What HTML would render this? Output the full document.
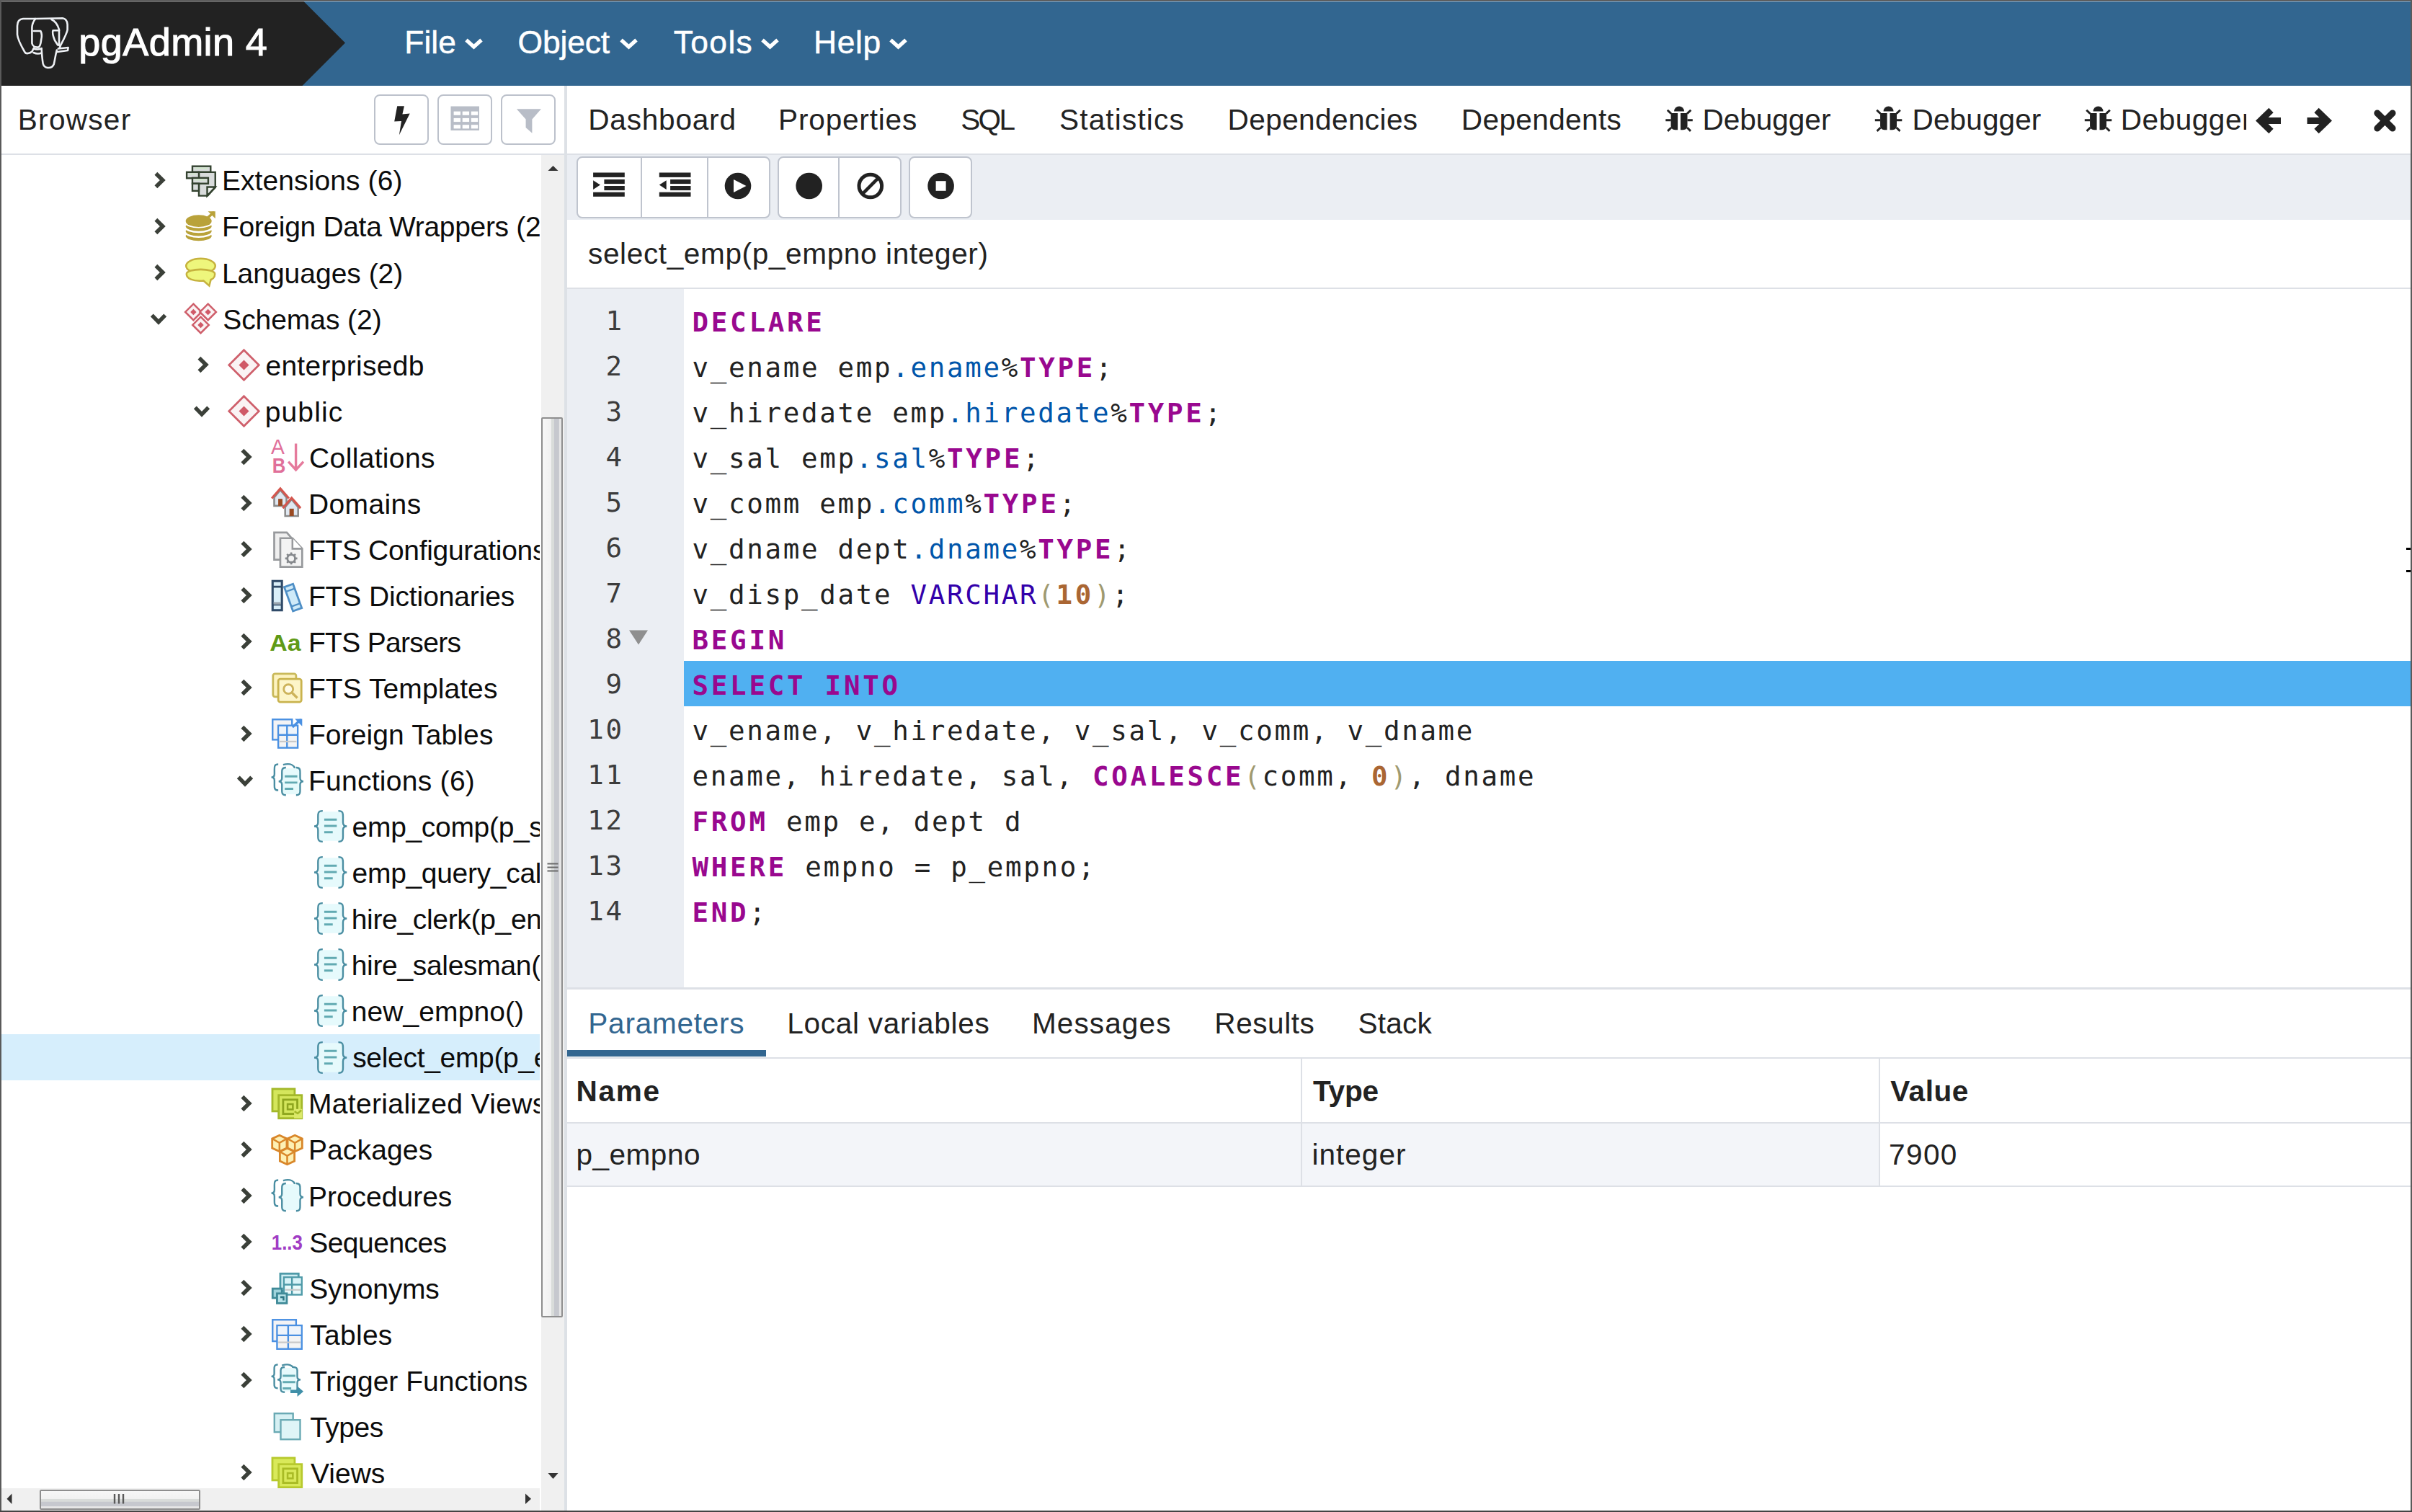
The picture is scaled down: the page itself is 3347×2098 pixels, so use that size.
<!DOCTYPE html>
<html lang="en"><head><meta charset="utf-8"><title>pgAdmin 4</title>
<style>
html,body{margin:0;padding:0;}
body{width:3347px;height:2098px;position:relative;overflow:hidden;background:#fff;font-family:"Liberation Sans",Arial,sans-serif;color:#222;}
div,svg{position:absolute;box-sizing:border-box;}
svg{overflow:visible;}
.t{white-space:pre;}
.clip{overflow:hidden;}
</style></head><body>
<div style="left:0px;top:0px;width:3347px;height:119px;background:#326690;"></div>
<svg style="left:0.0px;top:0.0px;" width="480.0" height="119.0" viewBox="0 0 480 119"><polygon points="0,0 419.5,0 479,59.5 419.5,119 0,119" fill="#222"/></svg>
<div class="t " style="left:109.3px;top:30.8px;font-size:54px;line-height:54px;color:#fff;letter-spacing:0.43px;-webkit-text-stroke:1.1px #fff;">pgAdmin 4</div>
<svg style="left:10.0px;top:10.0px;" width="100.0" height="100.0" viewBox="0 0 100 100"><g fill="none" stroke="#eef1f5" stroke-width="2.6" stroke-linejoin="round" stroke-linecap="round"><path d="M39 16 H22 C16.5 16.5 14 20.5 14 26 V38 C14.6 45 19 53 24.5 62.5 C26 65 31 64.5 34.5 61.5 L37 56.5"/><path d="M39 16.2 C36 20 34.6 24 34.4 28 V50 C35 54 39 56 43.5 55.5 C46 54.5 46.6 50 47.2 45 C48.4 40 48 36 46.3 33 H37"/><path d="M39 16 L77 15.2 C81 16 83.4 19 83.6 24 V31.5 C82.5 37 79.5 42.5 74 53 L72.7 56.5"/><path d="M61.5 17 C66 19 70 24 72 31 V53"/><path d="M72 32.2 H63.5 C62.4 35 63 38.5 66 46 L70.2 52.5"/><path d="M70.8 57.5 L84.6 56 L84 60 L69.6 62"/><path d="M47.6 57 C48 64 48.3 70 49.6 78 C50.5 82 52.5 83.6 56 84 C60.5 84.4 63.6 82 64.8 79 C66 74 66.6 68 68.8 59.5"/><path d="M37 57.5 C40 59 44 58.5 47.6 57.5 M36.5 63 C40 64.8 44.5 64.8 47.8 63.5"/></g></svg>
<div class="t " style="left:561.3px;top:37.0px;font-size:44.4px;line-height:44.4px;color:#fff;letter-spacing:0.01px;-webkit-text-stroke:0.5px #fff;">File</div>
<svg style="left:644.0px;top:52.0px;" width="27.0" height="18.5" viewBox="0 0 27 18.5"><polyline points="3,3.5 13.5,13 24,3.5" fill="none" stroke="#fff" stroke-width="5.2" stroke-linejoin="miter"/></svg>
<div class="t " style="left:718.5px;top:37.0px;font-size:44.4px;line-height:44.4px;color:#fff;letter-spacing:-0.12px;-webkit-text-stroke:0.5px #fff;">Object</div>
<svg style="left:858.9px;top:52.0px;" width="27.0" height="18.5" viewBox="0 0 27 18.5"><polyline points="3,3.5 13.5,13 24,3.5" fill="none" stroke="#fff" stroke-width="5.2" stroke-linejoin="miter"/></svg>
<div class="t " style="left:934.8px;top:37.0px;font-size:44.4px;line-height:44.4px;color:#fff;letter-spacing:1.34px;-webkit-text-stroke:0.5px #fff;">Tools</div>
<svg style="left:1055.2px;top:52.0px;" width="27.0" height="18.5" viewBox="0 0 27 18.5"><polyline points="3,3.5 13.5,13 24,3.5" fill="none" stroke="#fff" stroke-width="5.2" stroke-linejoin="miter"/></svg>
<div class="t " style="left:1129.1px;top:37.0px;font-size:44.4px;line-height:44.4px;color:#fff;letter-spacing:0.56px;-webkit-text-stroke:0.5px #fff;">Help</div>
<svg style="left:1233.4px;top:52.0px;" width="27.0" height="18.5" viewBox="0 0 27 18.5"><polyline points="3,3.5 13.5,13 24,3.5" fill="none" stroke="#fff" stroke-width="5.2" stroke-linejoin="miter"/></svg>
<div class="t " style="left:24.8px;top:146.3px;font-size:40.6px;line-height:40.6px;color:#222222;letter-spacing:1.26px;">Browser</div>
<div style="left:2px;top:213px;width:783px;height:2px;background:#dde0e6;"></div>
<div style="left:519px;top:131px;width:76px;height:70px;background:#fff;border:2px solid #bcc1cb;border-radius:8px;"></div>
<div style="left:607px;top:131px;width:76px;height:70px;background:#fff;border:2px solid #bcc1cb;border-radius:8px;"></div>
<div style="left:695px;top:131px;width:76px;height:70px;background:#fff;border:2px solid #bcc1cb;border-radius:8px;"></div>
<svg style="left:0;top:0" width="800" height="214" viewBox="0 0 800 214"><polygon points="551.2,147.3 560.9,147.3 558.4,158.5 568.7,157.6 553.9,187.2 557.0,168.1 547.2,168.6" fill="#222"/><rect x="625.5" y="147.5" width="39.5" height="33.5" fill="#b8bdc7"/><rect x="629.6" y="154.6" width="9.4" height="5.2" fill="#fff"/><rect x="629.6" y="163.9" width="9.4" height="5.2" fill="#fff"/><rect x="629.6" y="173.2" width="9.4" height="5.2" fill="#fff"/><rect x="641.7" y="154.6" width="9.4" height="5.2" fill="#fff"/><rect x="641.7" y="163.9" width="9.4" height="5.2" fill="#fff"/><rect x="641.7" y="173.2" width="9.4" height="5.2" fill="#fff"/><rect x="653.8" y="154.6" width="9.4" height="5.2" fill="#fff"/><rect x="653.8" y="163.9" width="9.4" height="5.2" fill="#fff"/><rect x="653.8" y="173.2" width="9.4" height="5.2" fill="#fff"/><polygon points="716.9,151.3 750.9,151.3 738.4,165.4 738.4,184.7 729.6,177.1 729.6,165.4" fill="#b8bdc7"/></svg>
<div style="left:783px;top:119px;width:4px;height:1979px;background:#dde1e6;"></div>
<div style="left:751px;top:214.5px;width:32px;height:1882px;background:#f0f0f0;"></div>
<div style="left:2px;top:2065px;width:747px;height:31px;background:#f0f0f0;"></div>
<div style="left:751.2px;top:579px;width:29.8px;height:1249px;background:linear-gradient(90deg,#f7f7f7 0%,#f1f1f1 44%,#d9dcda 46%,#d9dcda 60%,#c6c8ce 62%,#c6c8ce 86%,#e6e6e6 90%);border:2px solid #8e8e8e;border-radius:2px;"></div>
<div style="left:55px;top:2066.5px;width:223px;height:28.5px;background:linear-gradient(180deg,#f7f7f7 0%,#f1f1f1 44%,#d9dcda 46%,#d9dcda 60%,#c6c8ce 62%,#c6c8ce 86%,#e6e6e6 90%);border:2px solid #8e8e8e;border-radius:2px;"></div>
<svg style="left:0;top:0" width="790" height="2098" viewBox="0 0 790 2098"><polygon points="760.5,237 774.5,237 767.5,230" fill="#333"/><polygon points="760.5,2044 774.5,2044 767.5,2052" fill="#333"/><polygon points="16.5,2072.5 16.5,2087 9.5,2079.8" fill="#333"/><polygon points="729,2072.5 729,2087 737,2079.8" fill="#333"/><path d="M759.5 1198.5h15M759.5 1203.5h15M759.5 1208.5h15" stroke="#6a6a6a" stroke-width="2"/><path d="M159 2073v13.5M165 2073v13.5M171 2073v13.5" stroke="#5a5a5a" stroke-width="2.4"/></svg>
<div class="clip" style="left:2px;top:214.5px;width:747px;height:1850px;">
<svg style="left:210.3px;top:22.0px;" width="22.0" height="26.0" viewBox="0 0 22 26"><polyline points="4.4,3.8 13.8,13 4.4,22.2" fill="none" stroke="#3b4039" stroke-width="5.5"/></svg>
<svg style="left:253.5px;top:13.0px;" width="45.0" height="45.0" viewBox="0 0 16 16"><rect x="3.9" y="0.95" width="9" height="2.9" fill="#d9dcdc" stroke="#33422f" stroke-width="0.85" stroke-linejoin="miter"/><path d="M7.1 3.85 H15.2 V11.4 L11.4 15.5 H7.1 Z" fill="#d9dcdc" stroke="#33422f" stroke-width="0.85" stroke-linejoin="miter"/><rect x="1.1" y="3.85" width="6" height="3" fill="#d9dcdc" stroke="#33422f" stroke-width="0.85" stroke-linejoin="miter"/><rect x="3.9" y="6.7" width="7.8" height="2.8" fill="#d9dcdc" stroke="#33422f" stroke-width="0.85" stroke-linejoin="miter"/><rect x="3.9" y="9.5" width="3.2" height="3.6" fill="#d9dcdc" stroke="#33422f" stroke-width="0.85" stroke-linejoin="miter"/><path d="M11.2 15.5 V11.2 H15.2 Z" fill="#eef0ef" stroke="#33422f" stroke-width="0.85"/><path d="M5.2 1.9h6.2M2.2 4.8h3.8M5 7.7h5.4" stroke="#cfe8c8" stroke-width="0.6"/></svg>
<div class="t " style="left:305.9px;top:16.9px;font-size:39px;line-height:39px;color:#0c0c0c;letter-spacing:0.10px;">Extensions (6)</div>
<svg style="left:210.3px;top:86.1px;" width="22.0" height="26.0" viewBox="0 0 22 26"><polyline points="4.4,3.8 13.8,13 4.4,22.2" fill="none" stroke="#3b4039" stroke-width="5.5"/></svg>
<svg style="left:253.5px;top:77.1px;" width="45.0" height="45.0" viewBox="0 0 16 16"><ellipse cx="7" cy="12.6" rx="6.4" ry="2.4" fill="#b9a23a"/><ellipse cx="7" cy="11.2" rx="6.6" ry="2.3" fill="#fff"/><ellipse cx="7" cy="10.2" rx="6.4" ry="2.4" fill="#b9a23a"/><ellipse cx="7" cy="8.8" rx="6.6" ry="2.3" fill="#fff"/><ellipse cx="7" cy="7.8" rx="6.4" ry="2.4" fill="#b9a23a"/><ellipse cx="7" cy="6.4" rx="6.6" ry="2.3" fill="#fff"/><ellipse cx="7" cy="5.2" rx="6.4" ry="3" fill="#b9a23a"/><path d="M10.4 4.6 L14.6 0.8" stroke="#b9a23a" stroke-width="1.3"/><path d="M11.6 0.4 H15.2 V4 Z" fill="#b9a23a"/></svg>
<div class="t " style="left:305.9px;top:80.9px;font-size:39px;line-height:39px;color:#0c0c0c;letter-spacing:-0.32px;">Foreign Data Wrappers (2)</div>
<svg style="left:210.3px;top:150.1px;" width="22.0" height="26.0" viewBox="0 0 22 26"><polyline points="4.4,3.8 13.8,13 4.4,22.2" fill="none" stroke="#3b4039" stroke-width="5.5"/></svg>
<svg style="left:253.5px;top:141.1px;" width="45.0" height="45.0" viewBox="0 0 16 16"><ellipse cx="8" cy="4.6" rx="7.2" ry="3.6" fill="#eef67c" stroke="#c6b23e" stroke-width="0.9"/><path d="M1 8.6 C1 5.6 15 5.6 15 8.6 C15 10.4 13.6 11.2 13 11.4 L12.2 14.4 L9.4 11.9 C4 12.4 1 10.8 1 8.6 Z" fill="#eef67c" stroke="#c6b23e" stroke-width="0.9"/></svg>
<div class="t " style="left:305.9px;top:145.0px;font-size:39px;line-height:39px;color:#0c0c0c;letter-spacing:-0.01px;">Languages (2)</div>
<svg style="left:205.3px;top:218.6px;" width="26.0" height="22.0" viewBox="0 0 26 22"><polyline points="3.8,4.4 13,13.8 22.2,4.4" fill="none" stroke="#3b4039" stroke-width="5.5"/></svg>
<svg style="left:253.5px;top:205.1px;" width="45.0" height="45.0" viewBox="0 0 16 16"><path d="M4.4 0.5999999999999996 L8.4 4.6 L4.4 8.6 L0.40000000000000036 4.6 Z" fill="#faf3f4" stroke="#cf5f6b" stroke-width="0.9"/><path d="M4.4 3.0999999999999996 L5.9 4.6 L4.4 6.1 L2.9000000000000004 4.6 Z" fill="#d05a68"/><path d="M11.6 0.5999999999999996 L15.6 4.6 L11.6 8.6 L7.6 4.6 Z" fill="#faf3f4" stroke="#cf5f6b" stroke-width="0.9"/><path d="M11.6 3.0999999999999996 L13.1 4.6 L11.6 6.1 L10.1 4.6 Z" fill="#d05a68"/><path d="M8 7 L12 11 L8 15 L4 11 Z" fill="#faf3f4" stroke="#cf5f6b" stroke-width="0.9"/><path d="M8 9.5 L9.5 11 L8 12.5 L6.5 11 Z" fill="#d05a68"/></svg>
<div class="t " style="left:307.2px;top:209.0px;font-size:39px;line-height:39px;color:#0c0c0c;letter-spacing:-0.06px;">Schemas (2)</div>
<svg style="left:270.3px;top:278.2px;" width="22.0" height="26.0" viewBox="0 0 22 26"><polyline points="4.4,3.8 13.8,13 4.4,22.2" fill="none" stroke="#3b4039" stroke-width="5.5"/></svg>
<svg style="left:313.5px;top:269.2px;" width="45.0" height="45.0" viewBox="0 0 16 16"><path d="M8 0.5999999999999996 L15.4 8 L8 15.4 L0.5999999999999996 8 Z" fill="#faf3f4" stroke="#cf5f6b" stroke-width="0.95"/><path d="M8 5.5 L10.5 8 L8 10.5 L5.5 8 Z" fill="#d05a68"/></svg>
<div class="t " style="left:366.4px;top:273.1px;font-size:39px;line-height:39px;color:#0c0c0c;letter-spacing:0.30px;">enterprisedb</div>
<svg style="left:265.3px;top:346.8px;" width="26.0" height="22.0" viewBox="0 0 26 22"><polyline points="3.8,4.4 13,13.8 22.2,4.4" fill="none" stroke="#3b4039" stroke-width="5.5"/></svg>
<svg style="left:313.5px;top:333.2px;" width="45.0" height="45.0" viewBox="0 0 16 16"><path d="M8 0.5999999999999996 L15.4 8 L8 15.4 L0.5999999999999996 8 Z" fill="#faf3f4" stroke="#cf5f6b" stroke-width="0.95"/><path d="M8 5.5 L10.5 8 L8 10.5 L5.5 8 Z" fill="#d05a68"/></svg>
<div class="t " style="left:365.7px;top:337.1px;font-size:39px;line-height:39px;color:#0c0c0c;letter-spacing:1.13px;">public</div>
<svg style="left:330.3px;top:406.3px;" width="22.0" height="26.0" viewBox="0 0 22 26"><polyline points="4.4,3.8 13.8,13 4.4,22.2" fill="none" stroke="#3b4039" stroke-width="5.5"/></svg>
<svg style="left:373.5px;top:397.3px;" width="45.0" height="45.0" viewBox="0 0 16 16"><text x="0" y="6.4" font-family="Liberation Sans,Arial,sans-serif" font-size="10.6" fill="#e0709a" textLength="6.7" lengthAdjust="spacingAndGlyphs">A</text><text x="0.6" y="15.6" font-family="Liberation Sans,Arial,sans-serif" font-size="10.6" font-weight="700" fill="#e0709a" textLength="6.6" lengthAdjust="spacingAndGlyphs">B</text><path d="M12.3 1.2 V14 M8.6 10.2 L12.3 14.2 L16 10.2" fill="none" stroke="#e57a9c" stroke-width="1.2"/></svg>
<div class="t " style="left:427.1px;top:401.2px;font-size:39px;line-height:39px;color:#0c0c0c;letter-spacing:0.34px;">Collations</div>
<svg style="left:330.3px;top:470.3px;" width="22.0" height="26.0" viewBox="0 0 22 26"><polyline points="4.4,3.8 13.8,13 4.4,22.2" fill="none" stroke="#3b4039" stroke-width="5.5"/></svg>
<svg style="left:373.5px;top:461.3px;" width="45.0" height="45.0" viewBox="0 0 16 16"><path d="M1.6 5.06 V9.2 H7.649999999999999 V5.06 L4.624999999999999 1.38 Z" fill="#dfe8f2" stroke="#8a8a8a" stroke-width="0.9"/><rect x="3.59" y="5.75" width="2.07" height="3.4499999999999997" fill="#9a4a22"/><path d="M0.39999999999999997 5.52 L4.624999999999999 0.69 L8.849999999999998 5.52" fill="none" stroke="#d4564e" stroke-width="1.1"/><path d="M7 9.879999999999999 V14.2 H13.4 V9.879999999999999 L10.2 6.039999999999999 Z" fill="#dfe8f2" stroke="#8a8a8a" stroke-width="0.9"/><rect x="9.120000000000001" y="10.6" width="2.16" height="3.5999999999999996" fill="#9a4a22"/><path d="M5.8 10.36 L10.2 5.319999999999999 L14.6 10.36" fill="none" stroke="#d4564e" stroke-width="1.1"/></svg>
<div class="t " style="left:425.9px;top:465.2px;font-size:39px;line-height:39px;color:#0c0c0c;letter-spacing:0.40px;">Domains</div>
<svg style="left:330.3px;top:534.4px;" width="22.0" height="26.0" viewBox="0 0 22 26"><polyline points="4.4,3.8 13.8,13 4.4,22.2" fill="none" stroke="#3b4039" stroke-width="5.5"/></svg>
<svg style="left:373.5px;top:525.4px;" width="45.0" height="45.0" viewBox="0 0 16 16"><path d="M1.6 -0.4 H7.8 L10.2 2.4 V13 H1.6 Z" fill="#efefef" stroke="#97999c" stroke-width="0.95"/><path d="M4.6 2.4 H10.6 L15.4 7.6 V16.6 H4.6 Z" fill="#f3f3f3" stroke="#97999c" stroke-width="0.95"/><path d="M10.6 2.4 V7.6 H15.4" fill="#fff" stroke="#97999c" stroke-width="0.9"/><circle cx="10" cy="12.4" r="1.9" fill="none" stroke="#85888c" stroke-width="1"/><path d="M10 9.4v1M10 14.4v1M7 12.4h1M12 12.4h1M7.9 10.3l.7.7M11.4 13.8l.7.7M7.9 14.5l.7-.7M11.4 11l.7-.7" stroke="#85888c" stroke-width="0.9"/></svg>
<div class="t " style="left:425.9px;top:529.3px;font-size:39px;line-height:39px;color:#0c0c0c;letter-spacing:-0.32px;">FTS Configurations</div>
<svg style="left:330.3px;top:598.4px;" width="22.0" height="26.0" viewBox="0 0 22 26"><polyline points="4.4,3.8 13.8,13 4.4,22.2" fill="none" stroke="#3b4039" stroke-width="5.5"/></svg>
<svg style="left:373.5px;top:589.4px;" width="45.0" height="45.0" viewBox="0 0 16 16"><rect x="0.8" y="0.8" width="4.6" height="14.4" fill="#d9eef8" stroke="#2f4a68" stroke-width="1.1"/><path d="M0.8 3.6h4.6M0.8 12.4h4.6" stroke="#2f4a68" stroke-width="0.9"/><rect x="1.3" y="11.2" width="3.6" height="1.2" fill="#9aa4ad"/><g transform="rotate(-20 11 9)"><rect x="8.6" y="2.6" width="4.6" height="12.6" fill="#cfeaf8" stroke="#4f8fc6" stroke-width="1"/><path d="M8.6 5h4.6M8.6 12.8h4.6" stroke="#4f8fc6" stroke-width="0.8"/></g></svg>
<div class="t " style="left:425.9px;top:593.3px;font-size:39px;line-height:39px;color:#0c0c0c;letter-spacing:-0.12px;">FTS Dictionaries</div>
<svg style="left:330.3px;top:662.5px;" width="22.0" height="26.0" viewBox="0 0 22 26"><polyline points="4.4,3.8 13.8,13 4.4,22.2" fill="none" stroke="#3b4039" stroke-width="5.5"/></svg>
<svg style="left:373.5px;top:653.5px;" width="45.0" height="45.0" viewBox="0 0 16 16"><text x="-0.6" y="12.3" font-family="Liberation Sans,Arial,sans-serif" font-size="11.2" font-weight="700" fill="#5f9a16" textLength="15.4" lengthAdjust="spacingAndGlyphs">Aa</text></svg>
<div class="t " style="left:425.9px;top:657.4px;font-size:39px;line-height:39px;color:#0c0c0c;letter-spacing:-0.68px;">FTS Parsers</div>
<svg style="left:330.3px;top:726.5px;" width="22.0" height="26.0" viewBox="0 0 22 26"><polyline points="4.4,3.8 13.8,13 4.4,22.2" fill="none" stroke="#3b4039" stroke-width="5.5"/></svg>
<svg style="left:373.5px;top:717.5px;" width="45.0" height="45.0" viewBox="0 0 16 16"><rect x="1" y="1" width="11.4" height="11.4" rx="1" fill="#fdf3c0" stroke="#c9b95a" stroke-width="1"/><rect x="3.6" y="3.6" width="11.4" height="11.4" rx="1" fill="#fdf5c8" stroke="#c9b34e" stroke-width="1"/><circle cx="8.6" cy="8.6" r="2.3" fill="#fffbe6" stroke="#cdb35a" stroke-width="1"/><path d="M10.4 10.4 L13 13" stroke="#cdb35a" stroke-width="1.2"/></svg>
<div class="t " style="left:425.9px;top:721.4px;font-size:39px;line-height:39px;color:#0c0c0c;letter-spacing:0.08px;">FTS Templates</div>
<svg style="left:330.3px;top:790.6px;" width="22.0" height="26.0" viewBox="0 0 22 26"><polyline points="4.4,3.8 13.8,13 4.4,22.2" fill="none" stroke="#3b4039" stroke-width="5.5"/></svg>
<svg style="left:373.5px;top:781.6px;" width="45.0" height="45.0" viewBox="0 0 16 16"><rect x="0.8" y="0.8" width="9.6" height="10" fill="#f3f3f5" stroke="#4a90e2" stroke-width="0.85"/><rect x="3.6" y="3.8" width="9.6" height="11" fill="#f4f4f4" stroke="#4a90e2" stroke-width="0.85"/><rect x="4.1" y="4.3" width="8.6" height="3.96" fill="#eef4fb"/><path d="M3.6 8.42H13.2M7.92 3.8V14.8" stroke="#4a90e2" stroke-width="0.85"/><path d="M4.2 11.719999999999999H12.6" stroke="#c9c9c9" stroke-width="0.8"/><path d="M10.6 4.6 L14.8 0.8" stroke="#4a90e2" stroke-width="1.2"/><path d="M11.8 0.5 H15.4 V4.2 Z" fill="#4a90e2"/></svg>
<div class="t " style="left:425.9px;top:785.5px;font-size:39px;line-height:39px;color:#0c0c0c;letter-spacing:0.11px;">Foreign Tables</div>
<svg style="left:325.3px;top:859.2px;" width="26.0" height="22.0" viewBox="0 0 26 22"><polyline points="3.8,4.4 13,13.8 22.2,4.4" fill="none" stroke="#3b4039" stroke-width="5.5"/></svg>
<svg style="left:373.5px;top:845.7px;" width="45.0" height="45.0" viewBox="0 0 16 16"><path d="M3.6 0.2 C1.39 0.2 1.73 1.736 1.73 3.4000000000000004 V5.064 C1.73 6.216 1.22 6.6000000000000005 0.2 6.6000000000000005 C1.22 6.6000000000000005 1.73 6.984000000000001 1.73 8.136000000000001 V9.8 C1.73 11.464 1.39 13.0 3.6 13.0" fill="none" stroke="#4a8ea2" stroke-width="0.85"/><path d="M6 0.4 C10 -0.6 11.4 1 11.8 2.2" fill="none" stroke="#4a8ea2" stroke-width="0.85"/><path d="M5.78 2.2 H14.02 V15.0 H5.78 Z" fill="#e6fafc"/><path d="M7.4 1.8 C5.06 1.8 5.42 3.432 5.42 5.2 V6.968 C5.42 8.192 4.88 8.6 3.8 8.6 C4.88 8.6 5.42 9.008 5.42 10.232 V12.0 C5.42 13.768 5.06 15.4 7.4 15.4" fill="none" stroke="#4a8ea2" stroke-width="0.85"/><path d="M12.4 1.8 C14.74 1.8 14.38 3.432 14.38 5.2 V6.968 C14.38 8.192 14.92 8.6 16.0 8.6 C14.92 8.6 14.38 9.008 14.38 10.232 V12.0 C14.38 13.768 14.74 15.4 12.4 15.4" fill="none" stroke="#4a8ea2" stroke-width="0.85"/><path d="M6.799999999999999 6.1H12.999999999999998M6.799999999999999 9.200000000000001H12.999999999999998M6.799999999999999 12.3H10.999999999999998" stroke="#62aab2" stroke-width="1.05"/></svg>
<div class="t " style="left:425.9px;top:849.5px;font-size:39px;line-height:39px;color:#0c0c0c;letter-spacing:0.28px;">Functions (6)</div>
<svg style="left:433.5px;top:909.7px;" width="45.0" height="45.0" viewBox="0 0 16 16"><path d="M2.3100000000000005 0.8 H13.790000000000001 V15.2 H2.3100000000000005 Z" fill="#e6fafc"/><path d="M4.2 0.4 C1.47 0.4 1.8900000000000001 2.2239999999999998 1.8900000000000001 4.2 V6.176 C1.8900000000000001 7.5440000000000005 1.26 8.0 0 8.0 C1.26 8.0 1.8900000000000001 8.456 1.8900000000000001 9.824 V11.799999999999999 C1.8900000000000001 13.776 1.47 15.6 4.2 15.6" fill="none" stroke="#4a8ea2" stroke-width="0.85"/><path d="M11.900000000000002 0.4 C14.630000000000003 0.4 14.210000000000003 2.2239999999999998 14.210000000000003 4.2 V6.176 C14.210000000000003 7.5440000000000005 14.840000000000002 8.0 16.1 8.0 C14.840000000000002 8.0 14.210000000000003 8.456 14.210000000000003 9.824 V11.799999999999999 C14.210000000000003 13.776 14.630000000000003 15.6 11.900000000000002 15.6" fill="none" stroke="#4a8ea2" stroke-width="0.85"/><path d="M4.950000000000001 4.7H11.15M4.950000000000001 7.800000000000001H11.15M4.950000000000001 10.9H9.15" stroke="#62aab2" stroke-width="1.05"/></svg>
<div class="t " style="left:486.6px;top:913.6px;font-size:39px;line-height:39px;color:#0c0c0c;letter-spacing:-0.32px;">emp_comp(p_sal numeric, p_comm numeric)</div>
<svg style="left:433.5px;top:973.8px;" width="45.0" height="45.0" viewBox="0 0 16 16"><path d="M2.3100000000000005 0.8 H13.790000000000001 V15.2 H2.3100000000000005 Z" fill="#e6fafc"/><path d="M4.2 0.4 C1.47 0.4 1.8900000000000001 2.2239999999999998 1.8900000000000001 4.2 V6.176 C1.8900000000000001 7.5440000000000005 1.26 8.0 0 8.0 C1.26 8.0 1.8900000000000001 8.456 1.8900000000000001 9.824 V11.799999999999999 C1.8900000000000001 13.776 1.47 15.6 4.2 15.6" fill="none" stroke="#4a8ea2" stroke-width="0.85"/><path d="M11.900000000000002 0.4 C14.630000000000003 0.4 14.210000000000003 2.2239999999999998 14.210000000000003 4.2 V6.176 C14.210000000000003 7.5440000000000005 14.840000000000002 8.0 16.1 8.0 C14.840000000000002 8.0 14.210000000000003 8.456 14.210000000000003 9.824 V11.799999999999999 C14.210000000000003 13.776 14.630000000000003 15.6 11.900000000000002 15.6" fill="none" stroke="#4a8ea2" stroke-width="0.85"/><path d="M4.950000000000001 4.7H11.15M4.950000000000001 7.800000000000001H11.15M4.950000000000001 10.9H9.15" stroke="#62aab2" stroke-width="1.05"/></svg>
<div class="t " style="left:486.6px;top:977.6px;font-size:39px;line-height:39px;color:#0c0c0c;letter-spacing:-0.32px;">emp_query_caller()</div>
<svg style="left:433.5px;top:1037.8px;" width="45.0" height="45.0" viewBox="0 0 16 16"><path d="M2.3100000000000005 0.8 H13.790000000000001 V15.2 H2.3100000000000005 Z" fill="#e6fafc"/><path d="M4.2 0.4 C1.47 0.4 1.8900000000000001 2.2239999999999998 1.8900000000000001 4.2 V6.176 C1.8900000000000001 7.5440000000000005 1.26 8.0 0 8.0 C1.26 8.0 1.8900000000000001 8.456 1.8900000000000001 9.824 V11.799999999999999 C1.8900000000000001 13.776 1.47 15.6 4.2 15.6" fill="none" stroke="#4a8ea2" stroke-width="0.85"/><path d="M11.900000000000002 0.4 C14.630000000000003 0.4 14.210000000000003 2.2239999999999998 14.210000000000003 4.2 V6.176 C14.210000000000003 7.5440000000000005 14.840000000000002 8.0 16.1 8.0 C14.840000000000002 8.0 14.210000000000003 8.456 14.210000000000003 9.824 V11.799999999999999 C14.210000000000003 13.776 14.630000000000003 15.6 11.900000000000002 15.6" fill="none" stroke="#4a8ea2" stroke-width="0.85"/><path d="M4.950000000000001 4.7H11.15M4.950000000000001 7.800000000000001H11.15M4.950000000000001 10.9H9.15" stroke="#62aab2" stroke-width="1.05"/></svg>
<div class="t " style="left:485.7px;top:1041.7px;font-size:39px;line-height:39px;color:#0c0c0c;letter-spacing:-0.32px;">hire_clerk(p_ename character varying, p_deptno numeric)</div>
<svg style="left:433.5px;top:1101.8px;" width="45.0" height="45.0" viewBox="0 0 16 16"><path d="M2.3100000000000005 0.8 H13.790000000000001 V15.2 H2.3100000000000005 Z" fill="#e6fafc"/><path d="M4.2 0.4 C1.47 0.4 1.8900000000000001 2.2239999999999998 1.8900000000000001 4.2 V6.176 C1.8900000000000001 7.5440000000000005 1.26 8.0 0 8.0 C1.26 8.0 1.8900000000000001 8.456 1.8900000000000001 9.824 V11.799999999999999 C1.8900000000000001 13.776 1.47 15.6 4.2 15.6" fill="none" stroke="#4a8ea2" stroke-width="0.85"/><path d="M11.900000000000002 0.4 C14.630000000000003 0.4 14.210000000000003 2.2239999999999998 14.210000000000003 4.2 V6.176 C14.210000000000003 7.5440000000000005 14.840000000000002 8.0 16.1 8.0 C14.840000000000002 8.0 14.210000000000003 8.456 14.210000000000003 9.824 V11.799999999999999 C14.210000000000003 13.776 14.630000000000003 15.6 11.900000000000002 15.6" fill="none" stroke="#4a8ea2" stroke-width="0.85"/><path d="M4.950000000000001 4.7H11.15M4.950000000000001 7.800000000000001H11.15M4.950000000000001 10.9H9.15" stroke="#62aab2" stroke-width="1.05"/></svg>
<div class="t " style="left:485.7px;top:1105.7px;font-size:39px;line-height:39px;color:#0c0c0c;letter-spacing:-0.32px;">hire_salesman(p_ename character varying, p_sal numeric, p_comm numeric)</div>
<svg style="left:433.5px;top:1165.9px;" width="45.0" height="45.0" viewBox="0 0 16 16"><path d="M2.3100000000000005 0.8 H13.790000000000001 V15.2 H2.3100000000000005 Z" fill="#e6fafc"/><path d="M4.2 0.4 C1.47 0.4 1.8900000000000001 2.2239999999999998 1.8900000000000001 4.2 V6.176 C1.8900000000000001 7.5440000000000005 1.26 8.0 0 8.0 C1.26 8.0 1.8900000000000001 8.456 1.8900000000000001 9.824 V11.799999999999999 C1.8900000000000001 13.776 1.47 15.6 4.2 15.6" fill="none" stroke="#4a8ea2" stroke-width="0.85"/><path d="M11.900000000000002 0.4 C14.630000000000003 0.4 14.210000000000003 2.2239999999999998 14.210000000000003 4.2 V6.176 C14.210000000000003 7.5440000000000005 14.840000000000002 8.0 16.1 8.0 C14.840000000000002 8.0 14.210000000000003 8.456 14.210000000000003 9.824 V11.799999999999999 C14.210000000000003 13.776 14.630000000000003 15.6 11.900000000000002 15.6" fill="none" stroke="#4a8ea2" stroke-width="0.85"/><path d="M4.950000000000001 4.7H11.15M4.950000000000001 7.800000000000001H11.15M4.950000000000001 10.9H9.15" stroke="#62aab2" stroke-width="1.05"/></svg>
<div class="t " style="left:485.7px;top:1169.8px;font-size:39px;line-height:39px;color:#0c0c0c;letter-spacing:0.09px;">new_empno()</div>
<div style="left:0px;top:1220.45px;width:747px;height:64px;background:#d6eefc;"></div>
<svg style="left:433.5px;top:1230.0px;" width="45.0" height="45.0" viewBox="0 0 16 16"><path d="M2.3100000000000005 0.8 H13.790000000000001 V15.2 H2.3100000000000005 Z" fill="#e6fafc"/><path d="M4.2 0.4 C1.47 0.4 1.8900000000000001 2.2239999999999998 1.8900000000000001 4.2 V6.176 C1.8900000000000001 7.5440000000000005 1.26 8.0 0 8.0 C1.26 8.0 1.8900000000000001 8.456 1.8900000000000001 9.824 V11.799999999999999 C1.8900000000000001 13.776 1.47 15.6 4.2 15.6" fill="none" stroke="#4a8ea2" stroke-width="0.85"/><path d="M11.900000000000002 0.4 C14.630000000000003 0.4 14.210000000000003 2.2239999999999998 14.210000000000003 4.2 V6.176 C14.210000000000003 7.5440000000000005 14.840000000000002 8.0 16.1 8.0 C14.840000000000002 8.0 14.210000000000003 8.456 14.210000000000003 9.824 V11.799999999999999 C14.210000000000003 13.776 14.630000000000003 15.6 11.900000000000002 15.6" fill="none" stroke="#4a8ea2" stroke-width="0.85"/><path d="M4.950000000000001 4.7H11.15M4.950000000000001 7.800000000000001H11.15M4.950000000000001 10.9H9.15" stroke="#62aab2" stroke-width="1.05"/></svg>
<div class="t " style="left:487.2px;top:1233.8px;font-size:39px;line-height:39px;color:#0c0c0c;letter-spacing:-0.32px;">select_emp(p_empno integer)</div>
<svg style="left:330.3px;top:1303.0px;" width="22.0" height="26.0" viewBox="0 0 22 26"><polyline points="4.4,3.8 13.8,13 4.4,22.2" fill="none" stroke="#3b4039" stroke-width="5.5"/></svg>
<svg style="left:373.5px;top:1294.0px;" width="45.0" height="45.0" viewBox="0 0 16 16"><rect x="0.7" y="0.7" width="11" height="11" fill="#d4e65c" stroke="#a3b82a" stroke-width="1"/><rect x="3.8" y="3.8" width="11.4" height="11.4" fill="#d4e65c" stroke="#a3b82a" stroke-width="1"/><rect x="6" y="6" width="7" height="7" fill="none" stroke="#8ea51e" stroke-width="1"/><rect x="8.2" y="8.2" width="2.6" height="2.6" fill="none" stroke="#8ea51e" stroke-width="0.9"/><path d="M11.4 10.6h4v4.6h-4z" fill="#dbe96a"/><path d="M11.6 11.8 l1.6 1 1.8-1.6" stroke="#a3b82a" fill="none" stroke-width="0.9"/></svg>
<div class="t " style="left:425.9px;top:1297.9px;font-size:39px;line-height:39px;color:#0c0c0c;letter-spacing:0.35px;">Materialized Views</div>
<svg style="left:330.3px;top:1367.0px;" width="22.0" height="26.0" viewBox="0 0 22 26"><polyline points="4.4,3.8 13.8,13 4.4,22.2" fill="none" stroke="#3b4039" stroke-width="5.5"/></svg>
<svg style="left:373.5px;top:1358.0px;" width="45.0" height="45.0" viewBox="0 0 16 16"><path d="M4.2 0.7999999999999998 L7.800000000000001 2.48 V7.119999999999999 L4.2 8.8 L0.6000000000000001 7.119999999999999 V2.48 Z" fill="#fdf0b4" stroke="#d9872a" stroke-width="1"/><path d="M0.6000000000000001 2.48 L4.2 4.568 L7.800000000000001 2.48 M4.2 4.568 V8.8" fill="none" stroke="#d9872a" stroke-width="0.9"/><path d="M11.8 0.7999999999999998 L15.4 2.48 V7.119999999999999 L11.8 8.8 L8.200000000000001 7.119999999999999 V2.48 Z" fill="#fdf0b4" stroke="#d9872a" stroke-width="1"/><path d="M8.200000000000001 2.48 L11.8 4.568 L15.4 2.48 M11.8 4.568 V8.8" fill="none" stroke="#d9872a" stroke-width="0.9"/><path d="M8 7.199999999999999 L11.6 8.879999999999999 V13.52 L8 15.2 L4.4 13.52 V8.879999999999999 Z" fill="#fdf0b4" stroke="#d9872a" stroke-width="1"/><path d="M4.4 8.879999999999999 L8 10.968 L11.6 8.879999999999999 M8 10.968 V15.2" fill="none" stroke="#d9872a" stroke-width="0.9"/></svg>
<div class="t " style="left:425.9px;top:1361.9px;font-size:39px;line-height:39px;color:#0c0c0c;letter-spacing:0.14px;">Packages</div>
<svg style="left:330.3px;top:1431.1px;" width="22.0" height="26.0" viewBox="0 0 22 26"><polyline points="4.4,3.8 13.8,13 4.4,22.2" fill="none" stroke="#3b4039" stroke-width="5.5"/></svg>
<svg style="left:373.5px;top:1422.1px;" width="45.0" height="45.0" viewBox="0 0 16 16"><path d="M3.6 0.2 C1.39 0.2 1.73 1.736 1.73 3.4000000000000004 V5.064 C1.73 6.216 1.22 6.6000000000000005 0.2 6.6000000000000005 C1.22 6.6000000000000005 1.73 6.984000000000001 1.73 8.136000000000001 V9.8 C1.73 11.464 1.39 13.0 3.6 13.0" fill="none" stroke="#4a8ea2" stroke-width="0.85"/><path d="M6 0.4 C10 -0.6 11.4 1 11.8 2.2" fill="none" stroke="#4a8ea2" stroke-width="0.85"/><path d="M5.78 2.2 H14.02 V15.0 H5.78 Z" fill="#e6fafc"/><path d="M7.4 1.8 C5.06 1.8 5.42 3.432 5.42 5.2 V6.968 C5.42 8.192 4.88 8.6 3.8 8.6 C4.88 8.6 5.42 9.008 5.42 10.232 V12.0 C5.42 13.768 5.06 15.4 7.4 15.4" fill="none" stroke="#4a8ea2" stroke-width="0.85"/><path d="M12.4 1.8 C14.74 1.8 14.38 3.432 14.38 5.2 V6.968 C14.38 8.192 14.92 8.6 16.0 8.6 C14.92 8.6 14.38 9.008 14.38 10.232 V12.0 C14.38 13.768 14.74 15.4 12.4 15.4" fill="none" stroke="#4a8ea2" stroke-width="0.85"/></svg>
<div class="t " style="left:425.9px;top:1426.0px;font-size:39px;line-height:39px;color:#0c0c0c;">Procedures</div>
<svg style="left:330.3px;top:1495.1px;" width="22.0" height="26.0" viewBox="0 0 22 26"><polyline points="4.4,3.8 13.8,13 4.4,22.2" fill="none" stroke="#3b4039" stroke-width="5.5"/></svg>
<svg style="left:373.5px;top:1486.1px;" width="45.0" height="45.0" viewBox="0 0 16 16"><text x="0.3" y="11.7" font-family="Liberation Sans,Arial,sans-serif" font-size="10.6" font-weight="700" fill="#a13cc4" textLength="15.3" lengthAdjust="spacingAndGlyphs">1..3</text></svg>
<div class="t " style="left:427.2px;top:1490.0px;font-size:39px;line-height:39px;color:#0c0c0c;letter-spacing:-0.51px;">Sequences</div>
<svg style="left:330.3px;top:1559.2px;" width="22.0" height="26.0" viewBox="0 0 22 26"><polyline points="4.4,3.8 13.8,13 4.4,22.2" fill="none" stroke="#3b4039" stroke-width="5.5"/></svg>
<svg style="left:373.5px;top:1550.2px;" width="45.0" height="45.0" viewBox="0 0 16 16"><rect x="4.6" y="0.8" width="9" height="8.6" fill="#cfeef4" stroke="#4e9aa8" stroke-width="1"/><rect x="6.4" y="2.6" width="8.8" height="8.6" fill="#e9fafc" stroke="#4e9aa8" stroke-width="0.85"/><rect x="6.9" y="3.1" width="7.800000000000001" height="3.0959999999999996" fill="#d8f3f8"/><path d="M6.4 6.212H15.200000000000001M10.360000000000001 2.6V11.2" stroke="#4e9aa8" stroke-width="0.85"/><path d="M7.0 8.792H14.600000000000001" stroke="#c9c9c9" stroke-width="0.8"/><rect x="0.8" y="8.2" width="4.6" height="4.6" fill="#9fd3dc" stroke="#3f8a98" stroke-width="1"/><rect x="3" y="10.6" width="4.8" height="4.8" fill="#b9e4ea" stroke="#3f8a98" stroke-width="1"/><path d="M4.6 12.4h1.6v1.6" stroke="#2f7684" fill="none" stroke-width="0.9"/></svg>
<div class="t " style="left:427.2px;top:1554.1px;font-size:39px;line-height:39px;color:#0c0c0c;letter-spacing:-0.20px;">Synonyms</div>
<svg style="left:330.3px;top:1623.2px;" width="22.0" height="26.0" viewBox="0 0 22 26"><polyline points="4.4,3.8 13.8,13 4.4,22.2" fill="none" stroke="#3b4039" stroke-width="5.5"/></svg>
<svg style="left:373.5px;top:1614.2px;" width="45.0" height="45.0" viewBox="0 0 16 16"><rect x="0.8" y="0.8" width="11.6" height="10.6" fill="#f3f3f5" stroke="#4a90e2" stroke-width="0.85"/><rect x="3" y="3.6" width="12.2" height="11.6" fill="#f4f4f4" stroke="#4a90e2" stroke-width="0.85"/><rect x="3.5" y="4.1" width="11.2" height="4.176" fill="#eef4fb"/><path d="M3 8.472H15.2M8.49 3.6V15.2" stroke="#4a90e2" stroke-width="0.85"/><path d="M3.6 11.952H14.6" stroke="#c9c9c9" stroke-width="0.8"/></svg>
<div class="t " style="left:428.2px;top:1618.1px;font-size:39px;line-height:39px;color:#0c0c0c;letter-spacing:0.29px;">Tables</div>
<svg style="left:330.3px;top:1687.3px;" width="22.0" height="26.0" viewBox="0 0 22 26"><polyline points="4.4,3.8 13.8,13 4.4,22.2" fill="none" stroke="#3b4039" stroke-width="5.5"/></svg>
<svg style="left:373.5px;top:1678.3px;" width="45.0" height="45.0" viewBox="0 0 16 16"><path d="M3.4000000000000004 0.2 C1.3199999999999998 0.2 1.6400000000000001 1.5919999999999999 1.6400000000000001 3.1 V4.6080000000000005 C1.6400000000000001 5.652 1.16 6.0 0.2 6.0 C1.16 6.0 1.6400000000000001 6.348 1.6400000000000001 7.3919999999999995 V8.899999999999999 C1.6400000000000001 10.408 1.3199999999999998 11.799999999999999 3.4000000000000004 11.799999999999999" fill="none" stroke="#4a8ea2" stroke-width="0.85"/><path d="M5.4 0.6 C9 -0.6 10.6 0.8 11 1.8" fill="none" stroke="#4a8ea2" stroke-width="0.85"/><path d="M5.180000000000001 1.7999999999999998 H12.620000000000001 V13.4 H5.180000000000001 Z" fill="#e6fafc"/><path d="M6.800000000000001 1.4 C4.46 1.4 4.82 2.888 4.82 4.5 V6.112 C4.82 7.228 4.28 7.6 3.2 7.6 C4.28 7.6 4.82 7.9719999999999995 4.82 9.088 V10.700000000000001 C4.82 12.312000000000001 4.46 13.8 6.800000000000001 13.8" fill="none" stroke="#4a8ea2" stroke-width="0.85"/><path d="M11.000000000000002 1.4 C13.340000000000002 1.4 12.980000000000002 2.888 12.980000000000002 4.5 V6.112 C12.980000000000002 7.228 13.520000000000001 7.6 14.600000000000001 7.6 C13.520000000000001 7.6 12.980000000000002 7.9719999999999995 12.980000000000002 9.088 V10.700000000000001 C12.980000000000002 12.312000000000001 13.340000000000002 13.8 11.000000000000002 13.8" fill="none" stroke="#4a8ea2" stroke-width="0.85"/><path d="M5.800000000000001 5.699999999999999H12.0M5.800000000000001 8.8H12.0M5.800000000000001 11.9H10.0" stroke="#62aab2" stroke-width="1.05"/><path d="M9.6 12.6 H13 V10.8 L16 13.4 L13 16 V14.2 H9.6 Z" fill="#3f8fa8"/></svg>
<div class="t " style="left:428.2px;top:1682.2px;font-size:39px;line-height:39px;color:#0c0c0c;letter-spacing:0.01px;">Trigger Functions</div>
<svg style="left:373.5px;top:1742.3px;" width="45.0" height="45.0" viewBox="0 0 16 16"><rect x="1.7" y="1.5" width="9.2" height="9.2" fill="#d6f0f3" stroke="#6aaab4" stroke-width="0.85"/><rect x="4.8" y="4.7" width="9.6" height="9.6" fill="#dff5f7" stroke="#6aaab4" stroke-width="0.85"/></svg>
<div class="t " style="left:428.2px;top:1746.2px;font-size:39px;line-height:39px;color:#0c0c0c;letter-spacing:-0.50px;">Types</div>
<svg style="left:330.3px;top:1815.4px;" width="22.0" height="26.0" viewBox="0 0 22 26"><polyline points="4.4,3.8 13.8,13 4.4,22.2" fill="none" stroke="#3b4039" stroke-width="5.5"/></svg>
<svg style="left:373.5px;top:1806.4px;" width="45.0" height="45.0" viewBox="0 0 16 16"><rect x="0.7" y="0.7" width="11" height="11" fill="#d9e95a" stroke="#b7c92e" stroke-width="1"/><rect x="3.8" y="3.8" width="11.4" height="11.4" fill="#d9e95a" stroke="#b7c92e" stroke-width="1"/><rect x="6" y="6" width="7" height="7" fill="none" stroke="#a9bb25" stroke-width="1"/><rect x="8.2" y="8.2" width="2.6" height="2.6" fill="none" stroke="#a9bb25" stroke-width="0.9"/></svg>
<div class="t " style="left:429.0px;top:1810.3px;font-size:39px;line-height:39px;color:#0c0c0c;">Views</div>
</div>
<div class="t " style="left:816.3px;top:146.4px;font-size:40.6px;line-height:40.6px;color:#222222;letter-spacing:0.77px;">Dashboard</div>
<div class="t " style="left:1080.1px;top:146.4px;font-size:40.6px;line-height:40.6px;color:#222222;letter-spacing:0.80px;">Properties</div>
<div class="t " style="left:1333.2px;top:146.4px;font-size:40.6px;line-height:40.6px;color:#222222;letter-spacing:-2.68px;">SQL</div>
<div class="t " style="left:1470.0px;top:146.4px;font-size:40.6px;line-height:40.6px;color:#222222;letter-spacing:1.15px;">Statistics</div>
<div class="t " style="left:1703.6px;top:146.4px;font-size:40.6px;line-height:40.6px;color:#222222;letter-spacing:0.37px;">Dependencies</div>
<div class="t " style="left:2027.8px;top:146.4px;font-size:40.6px;line-height:40.6px;color:#222222;letter-spacing:0.36px;">Dependents</div>
<div class="t " style="left:2362.4px;top:146.4px;font-size:40.6px;line-height:40.6px;color:#222222;letter-spacing:-0.03px;">Debugger</div>
<div class="t " style="left:2653.6px;top:146.4px;font-size:40.6px;line-height:40.6px;color:#222222;letter-spacing:0.07px;">Debugger</div>
<div class="clip" style="left:2940px;top:130px;width:177px;height:70px;">
<div class="t " style="left:2.8px;top:16.4px;font-size:40.6px;line-height:40.6px;color:#222222;letter-spacing:0.49px;">Debugger</div>
</div>
<svg style="left:2300px;top:140px" width="1047" height="50" viewBox="2300 140 1047 50"><g transform="translate(2311.3,146.6) scale(0.11194)"><path d="M105 70 A62 62 0 0 1 230 70 Z" fill="#222"/><path d="M65 92 H150 V300 H118 C85 300 65 278 65 250 Z M185 92 H270 V250 C270 278 250 300 217 300 H185 Z" fill="#222"/><path d="M22 55 L68 98 M313 55 L267 98 M0 180 H66 M270 180 H335 M25 315 L70 272 M310 315 L266 272" stroke="#222" stroke-width="26" fill="none"/></g><g transform="translate(2601.8,146.6) scale(0.11194)"><path d="M105 70 A62 62 0 0 1 230 70 Z" fill="#222"/><path d="M65 92 H150 V300 H118 C85 300 65 278 65 250 Z M185 92 H270 V250 C270 278 250 300 217 300 H185 Z" fill="#222"/><path d="M22 55 L68 98 M313 55 L267 98 M0 180 H66 M270 180 H335 M25 315 L70 272 M310 315 L266 272" stroke="#222" stroke-width="26" fill="none"/></g><g transform="translate(2892.8,146.6) scale(0.11194)"><path d="M105 70 A62 62 0 0 1 230 70 Z" fill="#222"/><path d="M65 92 H150 V300 H118 C85 300 65 278 65 250 Z M185 92 H270 V250 C270 278 250 300 217 300 H185 Z" fill="#222"/><path d="M22 55 L68 98 M313 55 L267 98 M0 180 H66 M270 180 H335 M25 315 L70 272 M310 315 L266 272" stroke="#222" stroke-width="26" fill="none"/></g><path d="M3151.5 153 L3136.5 167.5 L3151.5 182 M3138 167.5 H3165" fill="none" stroke="#222" stroke-width="9" stroke-linejoin="miter"/><path d="M3214.5 153 L3229.5 167.5 L3214.5 182 M3228 167.5 H3201.5" fill="none" stroke="#222" stroke-width="9" stroke-linejoin="miter"/><path d="M3298.8 157 L3320 178 M3320 157 L3298.8 178" stroke="#222" stroke-width="9" stroke-linecap="round"/></svg>
<div style="left:787px;top:213px;width:2558px;height:2px;background:#dde0e6;"></div>
<div style="left:787px;top:215px;width:2558px;height:89.5px;background:#ebeef3;"></div>
<div style="left:799.5px;top:217px;width:269px;height:85.5px;background:#fff;border:2px solid #bfc4ce;border-radius:8px;"></div>
<div style="left:889px;top:219px;width:2px;height:82px;background:#bfc4ce;"></div>
<div style="left:981px;top:219px;width:2px;height:82px;background:#bfc4ce;"></div>
<div style="left:1078.5px;top:217px;width:172px;height:85.5px;background:#fff;border:2px solid #bfc4ce;border-radius:8px;"></div>
<div style="left:1163px;top:219px;width:2px;height:82px;background:#bfc4ce;"></div>
<div style="left:1260.5px;top:217px;width:88px;height:85.5px;background:#fff;border:2px solid #bfc4ce;border-radius:8px;"></div>
<svg style="left:787px;top:214px" width="600" height="92" viewBox="787 214 600 92"><rect x="823.1" y="239.5" width="43.7" height="6.4" fill="#222"/><rect x="838.4" y="249.0" width="28.4" height="6.1" fill="#222"/><rect x="838.4" y="258.0" width="28.4" height="6.1" fill="#222"/><rect x="823.1" y="266.7" width="43.7" height="6.1" fill="#222"/><polygon points="823.1,250.2 833.0,256.6 823.1,262.9" fill="#222"/><rect x="914.8" y="239.5" width="43.7" height="6.4" fill="#222"/><rect x="930.1" y="249.0" width="28.4" height="6.1" fill="#222"/><rect x="930.1" y="258.0" width="28.4" height="6.1" fill="#222"/><rect x="914.8" y="266.7" width="43.7" height="6.1" fill="#222"/><polygon points="924.7,250.2 914.8,256.6 924.7,262.9" fill="#222"/><circle cx="1024" cy="258" r="18.3" fill="#222"/><polygon points="1018,249 1035.5,258 1018,267" fill="#fff"/><circle cx="1122.7" cy="258" r="18.3" fill="#222"/><circle cx="1207.8" cy="258" r="15.8" fill="none" stroke="#222" stroke-width="5"/><path d="M1197.5 268.3 L1218.1 247.7" stroke="#222" stroke-width="4.6"/><circle cx="1305.6" cy="258" r="18.3" fill="#222"/><rect x="1298.6" y="251.2" width="14" height="13.6" fill="#fff"/></svg>
<div class="t " style="left:816.0px;top:332.1px;font-size:40.6px;line-height:40.6px;color:#222222;letter-spacing:0.61px;">select_emp(p_empno integer)</div>
<div style="left:787px;top:399px;width:2558px;height:2.3px;background:#dde0e6;"></div>
<div style="left:787px;top:401.3px;width:162px;height:969px;background:#ebeef3;"></div>
<div style="left:949px;top:917px;width:2396px;height:63px;background:#50b0f1;"></div>
<div class="t" style="left:960.5px;top:429.1px;font-size:37.5px;line-height:37.5px;letter-spacing:2.67px;font-family:'DejaVu Sans Mono','Liberation Mono',monospace;"><span style="color:#99088f;font-weight:700;letter-spacing:3.72px;">DECLARE</span></div>
<div class="t" style="left:787px;width:78.7px;text-align:right;top:427.1px;font-size:37.5px;line-height:37.5px;letter-spacing:2.67px;color:#3c3c3c;font-family:'DejaVu Sans Mono','Liberation Mono',monospace;">1</div>
<div class="t" style="left:960.5px;top:492.1px;font-size:37.5px;line-height:37.5px;letter-spacing:2.67px;font-family:'DejaVu Sans Mono','Liberation Mono',monospace;"><span style="color:#222;">v_ename emp</span><span style="color:#0055aa;">.ename</span><span style="color:#222;">%</span><span style="color:#99088f;font-weight:700;letter-spacing:3.72px;">TYPE</span><span style="color:#222;">;</span></div>
<div class="t" style="left:787px;width:78.7px;text-align:right;top:490.1px;font-size:37.5px;line-height:37.5px;letter-spacing:2.67px;color:#3c3c3c;font-family:'DejaVu Sans Mono','Liberation Mono',monospace;">2</div>
<div class="t" style="left:960.5px;top:555.1px;font-size:37.5px;line-height:37.5px;letter-spacing:2.67px;font-family:'DejaVu Sans Mono','Liberation Mono',monospace;"><span style="color:#222;">v_hiredate emp</span><span style="color:#0055aa;">.hiredate</span><span style="color:#222;">%</span><span style="color:#99088f;font-weight:700;letter-spacing:3.72px;">TYPE</span><span style="color:#222;">;</span></div>
<div class="t" style="left:787px;width:78.7px;text-align:right;top:553.1px;font-size:37.5px;line-height:37.5px;letter-spacing:2.67px;color:#3c3c3c;font-family:'DejaVu Sans Mono','Liberation Mono',monospace;">3</div>
<div class="t" style="left:960.5px;top:618.1px;font-size:37.5px;line-height:37.5px;letter-spacing:2.67px;font-family:'DejaVu Sans Mono','Liberation Mono',monospace;"><span style="color:#222;">v_sal emp</span><span style="color:#0055aa;">.sal</span><span style="color:#222;">%</span><span style="color:#99088f;font-weight:700;letter-spacing:3.72px;">TYPE</span><span style="color:#222;">;</span></div>
<div class="t" style="left:787px;width:78.7px;text-align:right;top:616.1px;font-size:37.5px;line-height:37.5px;letter-spacing:2.67px;color:#3c3c3c;font-family:'DejaVu Sans Mono','Liberation Mono',monospace;">4</div>
<div class="t" style="left:960.5px;top:681.1px;font-size:37.5px;line-height:37.5px;letter-spacing:2.67px;font-family:'DejaVu Sans Mono','Liberation Mono',monospace;"><span style="color:#222;">v_comm emp</span><span style="color:#0055aa;">.comm</span><span style="color:#222;">%</span><span style="color:#99088f;font-weight:700;letter-spacing:3.72px;">TYPE</span><span style="color:#222;">;</span></div>
<div class="t" style="left:787px;width:78.7px;text-align:right;top:679.1px;font-size:37.5px;line-height:37.5px;letter-spacing:2.67px;color:#3c3c3c;font-family:'DejaVu Sans Mono','Liberation Mono',monospace;">5</div>
<div class="t" style="left:960.5px;top:744.1px;font-size:37.5px;line-height:37.5px;letter-spacing:2.67px;font-family:'DejaVu Sans Mono','Liberation Mono',monospace;"><span style="color:#222;">v_dname dept</span><span style="color:#0055aa;">.dname</span><span style="color:#222;">%</span><span style="color:#99088f;font-weight:700;letter-spacing:3.72px;">TYPE</span><span style="color:#222;">;</span></div>
<div class="t" style="left:787px;width:78.7px;text-align:right;top:742.1px;font-size:37.5px;line-height:37.5px;letter-spacing:2.67px;color:#3c3c3c;font-family:'DejaVu Sans Mono','Liberation Mono',monospace;">6</div>
<div class="t" style="left:960.5px;top:807.1px;font-size:37.5px;line-height:37.5px;letter-spacing:2.67px;font-family:'DejaVu Sans Mono','Liberation Mono',monospace;"><span style="color:#222;">v_disp_date </span><span style="color:#3300aa;">VARCHAR</span><span style="color:#a09a70;">(</span><span style="color:#aa6633;font-weight:700;letter-spacing:3.72px;">10</span><span style="color:#a09a70;">)</span><span style="color:#222;">;</span></div>
<div class="t" style="left:787px;width:78.7px;text-align:right;top:805.1px;font-size:37.5px;line-height:37.5px;letter-spacing:2.67px;color:#3c3c3c;font-family:'DejaVu Sans Mono','Liberation Mono',monospace;">7</div>
<div class="t" style="left:960.5px;top:870.1px;font-size:37.5px;line-height:37.5px;letter-spacing:2.67px;font-family:'DejaVu Sans Mono','Liberation Mono',monospace;"><span style="color:#99088f;font-weight:700;letter-spacing:3.72px;">BEGIN</span></div>
<div class="t" style="left:787px;width:78.7px;text-align:right;top:868.1px;font-size:37.5px;line-height:37.5px;letter-spacing:2.67px;color:#3c3c3c;font-family:'DejaVu Sans Mono','Liberation Mono',monospace;">8</div>
<div class="t" style="left:960.5px;top:933.1px;font-size:37.5px;line-height:37.5px;letter-spacing:2.67px;font-family:'DejaVu Sans Mono','Liberation Mono',monospace;"><span style="color:#99088f;font-weight:700;letter-spacing:3.72px;">SELECT INTO</span></div>
<div class="t" style="left:787px;width:78.7px;text-align:right;top:931.1px;font-size:37.5px;line-height:37.5px;letter-spacing:2.67px;color:#3c3c3c;font-family:'DejaVu Sans Mono','Liberation Mono',monospace;">9</div>
<div class="t" style="left:960.5px;top:996.1px;font-size:37.5px;line-height:37.5px;letter-spacing:2.67px;font-family:'DejaVu Sans Mono','Liberation Mono',monospace;"><span style="color:#222;">v_ename, v_hiredate, v_sal, v_comm, v_dname</span></div>
<div class="t" style="left:787px;width:78.7px;text-align:right;top:994.1px;font-size:37.5px;line-height:37.5px;letter-spacing:2.67px;color:#3c3c3c;font-family:'DejaVu Sans Mono','Liberation Mono',monospace;">10</div>
<div class="t" style="left:960.5px;top:1059.1px;font-size:37.5px;line-height:37.5px;letter-spacing:2.67px;font-family:'DejaVu Sans Mono','Liberation Mono',monospace;"><span style="color:#222;">ename, hiredate, sal, </span><span style="color:#99088f;font-weight:700;letter-spacing:3.72px;">COALESCE</span><span style="color:#a09a70;">(</span><span style="color:#222;">comm, </span><span style="color:#aa6633;font-weight:700;letter-spacing:3.72px;">0</span><span style="color:#a09a70;">)</span><span style="color:#222;">, dname</span></div>
<div class="t" style="left:787px;width:78.7px;text-align:right;top:1057.1px;font-size:37.5px;line-height:37.5px;letter-spacing:2.67px;color:#3c3c3c;font-family:'DejaVu Sans Mono','Liberation Mono',monospace;">11</div>
<div class="t" style="left:960.5px;top:1122.1px;font-size:37.5px;line-height:37.5px;letter-spacing:2.67px;font-family:'DejaVu Sans Mono','Liberation Mono',monospace;"><span style="color:#99088f;font-weight:700;letter-spacing:3.72px;">FROM</span><span style="color:#222;"> emp e, dept d</span></div>
<div class="t" style="left:787px;width:78.7px;text-align:right;top:1120.1px;font-size:37.5px;line-height:37.5px;letter-spacing:2.67px;color:#3c3c3c;font-family:'DejaVu Sans Mono','Liberation Mono',monospace;">12</div>
<div class="t" style="left:960.5px;top:1185.1px;font-size:37.5px;line-height:37.5px;letter-spacing:2.67px;font-family:'DejaVu Sans Mono','Liberation Mono',monospace;"><span style="color:#99088f;font-weight:700;letter-spacing:3.72px;">WHERE</span><span style="color:#222;"> empno = p_empno;</span></div>
<div class="t" style="left:787px;width:78.7px;text-align:right;top:1183.1px;font-size:37.5px;line-height:37.5px;letter-spacing:2.67px;color:#3c3c3c;font-family:'DejaVu Sans Mono','Liberation Mono',monospace;">13</div>
<div class="t" style="left:960.5px;top:1248.1px;font-size:37.5px;line-height:37.5px;letter-spacing:2.67px;font-family:'DejaVu Sans Mono','Liberation Mono',monospace;"><span style="color:#99088f;font-weight:700;letter-spacing:3.72px;">END</span><span style="color:#222;">;</span></div>
<div class="t" style="left:787px;width:78.7px;text-align:right;top:1246.1px;font-size:37.5px;line-height:37.5px;letter-spacing:2.67px;color:#3c3c3c;font-family:'DejaVu Sans Mono','Liberation Mono',monospace;">14</div>
<svg style="left:873.0px;top:874.0px;" width="27.0" height="21.0" viewBox="0 0 27 20"><polygon points="0,0 26,0 13,20" fill="#8f8f8f"/></svg>
<div style="left:787px;top:1370px;width:2558px;height:2.5px;background:#dde0e6;"></div>
<div class="t " style="left:816.3px;top:1400.1px;font-size:40.6px;line-height:40.6px;color:#326690;letter-spacing:0.73px;">Parameters</div>
<div class="t " style="left:1092.3px;top:1400.1px;font-size:40.6px;line-height:40.6px;color:#222222;letter-spacing:0.70px;">Local variables</div>
<div class="t " style="left:1431.9px;top:1400.1px;font-size:40.6px;line-height:40.6px;color:#222222;letter-spacing:1.09px;">Messages</div>
<div class="t " style="left:1685.3px;top:1400.1px;font-size:40.6px;line-height:40.6px;color:#222222;letter-spacing:0.54px;">Results</div>
<div class="t " style="left:1884.5px;top:1400.1px;font-size:40.6px;line-height:40.6px;color:#222222;letter-spacing:0.21px;">Stack</div>
<div style="left:787px;top:1457px;width:276px;height:9px;background:#326690;"></div>
<div style="left:787px;top:1466.5px;width:2558px;height:2.5px;background:#dde0e6;"></div>
<div style="left:787px;top:1558.5px;width:1820px;height:87px;background:#f3f5f9;"></div>
<div style="left:787px;top:1556.8px;width:2558px;height:2px;background:#dde0e6;"></div>
<div style="left:787px;top:1645px;width:2558px;height:2px;background:#dde0e6;"></div>
<div style="left:1804.5px;top:1469px;width:2px;height:177px;background:#dde0e6;"></div>
<div style="left:2606.5px;top:1469px;width:2px;height:177px;background:#dde0e6;"></div>
<div class="t " style="left:799.6px;top:1493.6px;font-size:40.6px;line-height:40.6px;color:#222222;font-weight:700;letter-spacing:1.67px;">Name</div>
<div class="t " style="left:1821.9px;top:1493.6px;font-size:40.6px;line-height:40.6px;color:#222222;font-weight:700;letter-spacing:-0.14px;">Type</div>
<div class="t " style="left:2623.3px;top:1493.6px;font-size:40.6px;line-height:40.6px;color:#222222;font-weight:700;letter-spacing:0.49px;">Value</div>
<div class="t " style="left:799.4px;top:1581.6px;font-size:40.6px;line-height:40.6px;color:#222222;letter-spacing:0.49px;">p_empno</div>
<div class="t " style="left:1820.4px;top:1581.6px;font-size:40.6px;line-height:40.6px;color:#222222;letter-spacing:1.00px;">integer</div>
<div class="t " style="left:2621.0px;top:1581.6px;font-size:40.6px;line-height:40.6px;color:#222222;letter-spacing:1.37px;">7900</div>
<div style="left:0px;top:0px;width:3347px;height:1px;background:#444;"></div>
<div style="left:0px;top:1px;width:3347px;height:1px;background:#c4c4c4;"></div>
<div style="left:0px;top:0px;width:2px;height:2098px;background:#5a5a5a;"></div>
<div style="left:3345px;top:0px;width:2px;height:2098px;background:#5a5a5a;"></div>
<div style="left:0px;top:2096px;width:3347px;height:2px;background:#444;"></div>
<div style="left:3339px;top:760px;width:6px;height:3px;background:#000;"></div>
<div style="left:3339px;top:790.5px;width:6px;height:3px;background:#000;"></div>
</body></html>
